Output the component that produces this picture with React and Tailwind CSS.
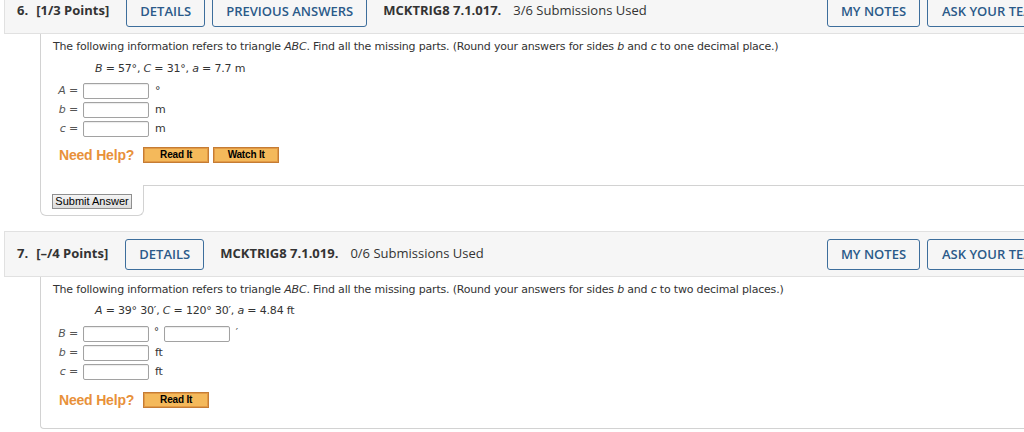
import React from 'react'

const HeadBtn = ({ children, w }) => (
  <button className={`${w} h-[31px] border border-[#3d6e9c] rounded-[3px] text-[#2b5a89] font-semibold text-[13px] leading-none`}>
    {children}
  </button>
)

const Header = ({ num, points, prev, code, used }) => (
  <div className="ml-[4px] h-[46px] border border-[#e1e1e1] bg-[#f6f6f6] flex items-center pl-[12px] pr-[12px] font-['Open_Sans',sans-serif] text-[13px] text-[#333]">
    <span className="font-bold">{num}</span>
    <span className="font-bold ml-[8px]">{points}</span>
    <div className="ml-[17px] flex gap-[7px]">
      <HeadBtn w="w-[79px]">DETAILS</HeadBtn>
      {prev && <HeadBtn w="w-[155px]">PREVIOUS ANSWERS</HeadBtn>}
    </div>
    <span className="font-bold ml-[16px]">{code}</span>
    <span className="ml-[12px]">{used}</span>
    <div className="ml-auto flex gap-[7px]">
      <HeadBtn w="w-[93px]">MY NOTES</HeadBtn>
      <HeadBtn w="w-[160px] text-left pl-[14px]">ASK YOUR TEACHER</HeadBtn>
    </div>
  </div>
)

const Box = () => (
  <span className="block w-[66px] h-[16px] border border-[#a2a2a2] rounded-[2px] bg-white shadow-[inset_0_1px_1px_rgba(0,0,0,0.08)]" />
)

const Row = ({ v, unit, extra }) => (
  <div className="flex items-center h-[16px]">
    <span className="w-[25px] text-right text-[#555]">
      <i>{v}</i> =
    </span>
    <span className="ml-[5px]">
      <Box />
    </span>
    {extra ? (
      <>
        <span className="ml-[5px] -mt-[6px] text-[10px]">°</span>
        <span className="ml-[5px]">
          <Box />
        </span>
        <span className="ml-[6px] -mt-[4px] text-[10px]">′</span>
      </>
    ) : (
      <span className="ml-[6px]">{unit}</span>
    )}
  </div>
)

const OrangeBtn = ({ children }) => (
  <button className="block w-[66px] h-[16px] border border-[#c57c34] bg-[#f4b95b] shadow-[inset_0_0_0_1px_#e29a45] font-['Liberation_Sans',sans-serif] font-bold text-[10px] leading-none text-black">
    {children}
  </button>
)

const Help = ({ watch }) => (
  <div className="flex items-center h-[16px] pl-[6px]">
    <span className="font-['Liberation_Sans',sans-serif] font-bold text-[14px] text-[#e8913a]">Need Help?</span>
    <div className="ml-[9px] flex gap-[4px]">
      <OrangeBtn>Read It</OrangeBtn>
      {watch && <OrangeBtn>Watch It</OrangeBtn>}
    </div>
  </div>
)

const Prompt = ({ decimals }) => (
  <p className="leading-[16px]">
    The following information refers to triangle <i>ABC</i>. Find all the missing parts. (Round your answers for sides <i>b</i> and <i>c</i> to {decimals} decimal {decimals === 'one' ? 'place' : 'places'}.)
  </p>
)

export default function App() {
  const qFont = "font-['DejaVu_Sans',Verdana,sans-serif] text-[11px] tracking-[-0.19px] text-[#333]"
  return (
    <div className="w-[1024px] h-[432px] overflow-hidden bg-white">
      <div className="w-[1100px] -mt-[12px]">
        <Header num="6." points="[1/3 Points]" prev code="MCKTRIG8 7.1.017." used="3/6 Submissions Used" />
        <div className={`ml-[40px] border-l border-[#d2d2d2] pl-[12px] pt-[5px] pb-[22px] ${qFont}`}>
          <Prompt decimals="one" />
          <p className="mt-[6px] pl-[42px] leading-[16px]">
            <i>B</i> = 57°, <i>C</i> = 31°, <i>a</i> = 7.7 m
          </p>
          <div className="mt-[6px] flex flex-col gap-[3px]">
            <Row v="A" unit="°" />
            <Row v="b" unit="m" />
            <Row v="c" unit="m" />
          </div>
          <div className="mt-[10px]">
            <Help watch />
          </div>
        </div>
        <div className="ml-[40px] flex">
          <div className="w-[104px] h-[31px] border-l border-r border-b border-[#d2d2d2] rounded-b-[6px] pl-[11px] pt-[9px]">
            <button className="block w-[80px] h-[15px] border border-[#8f8f8f] bg-gradient-to-b from-[#f4f4f4] to-[#dcdcdc] font-['Liberation_Sans',sans-serif] text-[11px] leading-none text-black">
              Submit Answer
            </button>
          </div>
          <div className="flex-1 border-t border-[#d2d2d2]" />
        </div>

        <div className="mt-[15px]">
          <Header num="7." points="[–/4 Points]" code="MCKTRIG8 7.1.019." used="0/6 Submissions Used" />
        </div>
        <div className={`ml-[40px] border-l border-b border-[#d2d2d2] rounded-bl-[4px] pl-[12px] pt-[5px] pb-[20px] ${qFont}`}>
          <Prompt decimals="two" />
          <p className="mt-[5px] pl-[42px] leading-[16px]">
            <i>A</i> = 39° 30′, <i>C</i> = 120° 30′, <i>a</i> = 4.84 ft
          </p>
          <div className="mt-[7px] flex flex-col gap-[3px]">
            <Row v="B" extra />
            <Row v="b" unit="ft" />
            <Row v="c" unit="ft" />
          </div>
          <div className="mt-[12px]">
            <Help />
          </div>
        </div>
      </div>
    </div>
  )
}
